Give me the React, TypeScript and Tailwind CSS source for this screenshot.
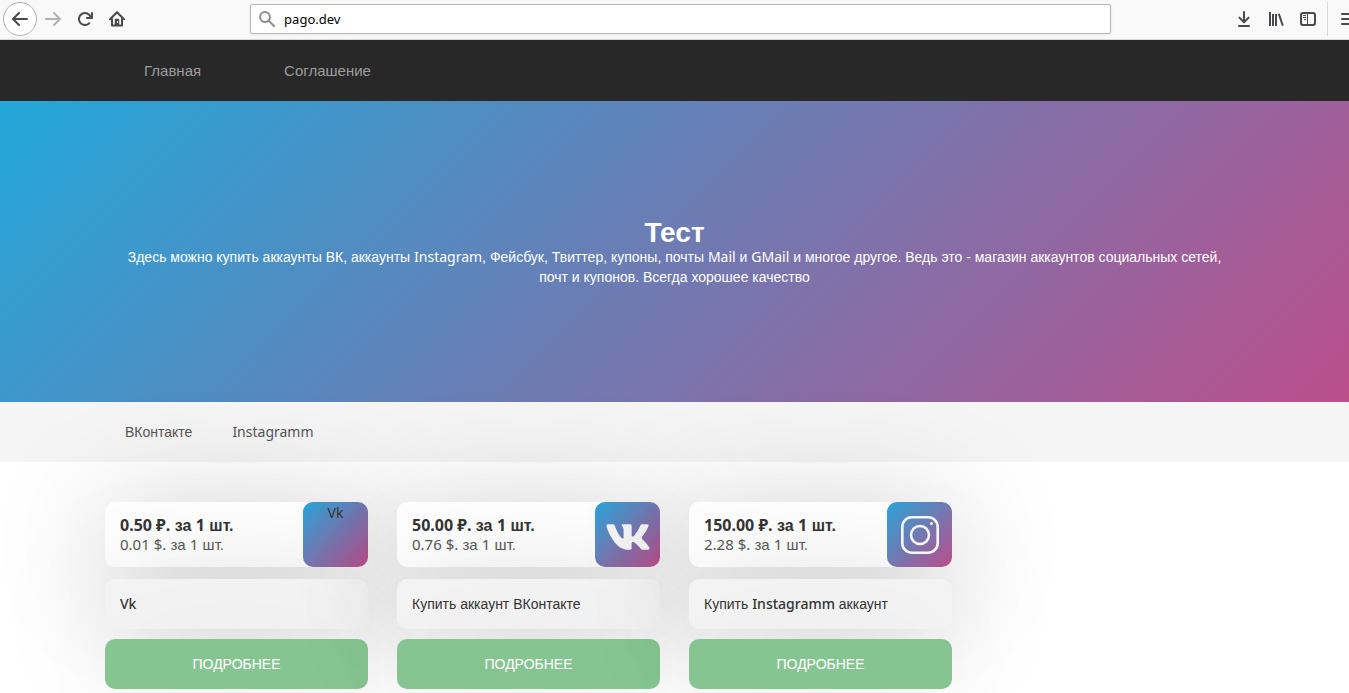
import React from "react";
import { FaVk } from "react-icons/fa";

const latin = "font-['Noto_Sans',sans-serif]";

function Latin({ children }: { children: React.ReactNode }) {
  return <span className={latin}>{children}</span>;
}

function Glyph({ children }: { children: React.ReactNode }) {
  return (
    <svg viewBox="0 0 16 16" className="size-4" fill="currentColor" aria-hidden="true">
      {children}
    </svg>
  );
}

function ToolButton({ label, className = "", children }: { label: string; className?: string; children: React.ReactNode }) {
  return (
    <button
      type="button"
      aria-label={label}
      className={`flex h-8 w-8 shrink-0 items-center justify-center text-[#4a4a4c] ${className}`}
    >
      {children}
    </button>
  );
}

const arrow =
  "M15 7H3.414l4.293-4.293a1 1 0 0 0-1.414-1.414l-6 6a1 1 0 0 0 0 1.414l6 6a1 1 0 0 0 1.414-1.414L3.414 9H15a1 1 0 0 0 0-2z";

function BrowserBar() {
  return (
    <div className="flex h-10 items-center overflow-hidden border-b border-[#d7d7d8] bg-[#f9f9fa] pb-px pl-[3px]">
      <button
        type="button"
        aria-label="Back"
        className="flex size-[34px] shrink-0 items-center justify-center rounded-full border border-[#b1b1b3] bg-white text-[#4a4a4c]"
      >
        <Glyph>
          <path d={arrow} />
        </Glyph>
      </button>
      <ToolButton label="Forward" className="opacity-40">
        <Glyph>
          <path d={arrow} transform="matrix(-1 0 0 1 16 0)" />
        </Glyph>
      </ToolButton>
      <ToolButton label="Reload">
        <Glyph>
          <path d="M15 1a1 1 0 0 0-1 1v2.418A6.995 6.995 0 1 0 8 15a6.954 6.954 0 0 0 4.95-2.05 1 1 0 0 0-1.414-1.414A5.019 5.019 0 1 1 12.549 6H10a1 1 0 0 0 0 2h5a1 1 0 0 0 1-1V2a1 1 0 0 0-1-1z" />
        </Glyph>
      </ToolButton>
      <ToolButton label="Home">
        <Glyph>
          <path
            d="M1 8.2 8 1.300l7 6.900M3 8v6.500h10V8"
            fill="none"
            stroke="currentColor"
            strokeWidth="2"
            strokeLinecap="round"
            strokeLinejoin="round"
          />
          <path d="M5.800 15V9c0-.8.500-1.300 1.200-1.300h2c.7 0 1.200.5 1.200 1.300v6z" />
          <path d="M8 10h1v2H8z" fill="#f9f9fa" />
        </Glyph>
      </ToolButton>
      <div className="flex-[117]" />
      <label className="flex h-[30px] flex-[850] items-center gap-[9px] rounded-xs border border-[#b9b9bb] bg-white pl-2 shadow-[0_1px_3px_rgba(0,0,0,0.08)]">
        <svg viewBox="0 0 16 16" className="size-4 shrink-0" fill="none" stroke="#8c8c8e" strokeWidth="2" aria-hidden="true">
          <circle cx="6" cy="6" r="4.900" />
          <path d="M9.600 9.600 15 15" strokeLinecap="round" />
        </svg>
        <input
          aria-label="Address"
          defaultValue="pago.dev"
          className="min-w-0 flex-1 bg-transparent pt-0.5 font-['Noto_Sans',sans-serif] text-[13px] text-black outline-none"
        />
      </label>
      <div className="flex-[117]" />
      <ToolButton label="Downloads">
        <Glyph>
          <path
            d="M8 1v9.500M3.400 6.600 8 11.200l4.600-4.600M3 15h10"
            fill="none"
            stroke="currentColor"
            strokeWidth="2"
            strokeLinecap="round"
            strokeLinejoin="round"
          />
        </Glyph>
      </ToolButton>
      <ToolButton label="Library">
        <Glyph>
          <path d="M2 1v14M5 3v12M8 3v12M10.800 2.800 14.800 14.700" fill="none" stroke="currentColor" strokeWidth="2" />
        </Glyph>
      </ToolButton>
      <ToolButton label="Sidebars">
        <Glyph>
          <rect x="1" y="2" width="14" height="12" rx="2" fill="none" stroke="currentColor" strokeWidth="2" />
          <path d="M7 2h1v12H7zM3 4h3v1H3zM3 6h3v1H3zM4 8h2v1H4z" />
        </Glyph>
      </ToolButton>
      <div className="ml-[3px] h-[34px] w-px shrink-0 bg-[#d7d7d8]" />
      <div className="w-[21px] shrink-0 overflow-hidden pl-[13px]">
        <button type="button" aria-label="Menu" className="block w-4 text-[#4a4a4c]">
          <Glyph>
            <path d="M1 3h14M1 8h14M1 13h14" stroke="currentColor" strokeWidth="2" strokeLinecap="round" />
          </Glyph>
        </button>
      </div>
    </div>
  );
}

function InstagramMark() {
  return (
    <svg viewBox="0 0 38 38" className="size-[38px]" fill="none" stroke="#f7f7f7" strokeWidth="2.600" aria-hidden="true">
      <rect x="1.300" y="1.300" width="35.400" height="35.400" rx="9.500" />
      <circle cx="19" cy="19" r="9" />
      <circle cx="30.500" cy="7.600" r="1.500" fill="#f7f7f7" stroke="none" />
    </svg>
  );
}

type Product = { rub: string; usd: string; title: React.ReactNode; mark: React.ReactNode };

const products: Product[] = [
  {
    rub: "0.50 ₽",
    usd: "0.01 $",
    title: <Latin>Vk</Latin>,
    mark: <span className={`self-start text-sm leading-[22px] text-[#333] ${latin}`}>Vk</span>,
  },
  {
    rub: "50.00 ₽",
    usd: "0.76 $",
    title: "Купить аккаунт ВКонтакте",
    mark: <FaVk className="mt-1 size-[46px] text-[#f3f3f3]" aria-hidden="true" />,
  },
  {
    rub: "150.00 ₽",
    usd: "2.28 $",
    title: (
      <>
        Купить <Latin>Instagramm</Latin> аккаунт
      </>
    ),
    mark: <InstagramMark />,
  },
];

function Card({ product }: { product: Product }) {
  return (
    <article>
      <div className="flex h-[65px] justify-between rounded-[10px] bg-white shadow-[0_10px_120px_rgba(0,0,0,0.22)]">
        <div className="pt-3.5 pl-[15px] text-[#333]">
          <p className="text-base leading-[18px] font-bold">
            <Latin>{product.rub}.</Latin> за <Latin>1</Latin> шт.
          </p>
          <p className="text-[15px] leading-[18px] text-[#555]">
            <Latin>{product.usd}.</Latin> за <Latin>1</Latin> шт.
          </p>
        </div>
        <div className="flex size-[65px] items-center justify-center rounded-[10px] bg-[linear-gradient(135deg,#27a5d8,#bd4c8a)]">
          {product.mark}
        </div>
      </div>
      <h2 className="mt-3 flex h-[50px] items-center rounded-[10px] bg-[#f4f4f4] pl-[15px] text-sm font-medium text-[#333] shadow-[0_10px_120px_rgba(0,0,0,0.18)]">
        <span>{product.title}</span>
      </h2>
      <button
        type="button"
        className="mt-2.5 block h-[50px] w-full rounded-[10px] bg-[#86c591] text-sm text-white shadow-[0_0_120px_rgba(0,0,0,0.06)]"
      >
        ПОДРОБНЕЕ
      </button>
    </article>
  );
}

export default function App() {
  return (
    <div className="min-h-screen overflow-x-hidden bg-white font-['Liberation_Sans',Arial,sans-serif]">
      <BrowserBar />
      <nav className="bg-[#282828]">
        <div className="mx-auto flex h-[61px] max-w-[1169px] items-center gap-[83px] px-[54px] pt-0.5 text-[15px] text-[#9d9d9d]">
          <a href="#main">Главная</a>
          <a href="#terms">Соглашение</a>
        </div>
      </nav>
      <header className="flex h-[301px] flex-col items-center justify-center bg-[linear-gradient(135deg,#22a7d9,#bb4f8c)] px-24 pt-0.5 text-center text-white">
        <h1 className="text-[28px] leading-7 font-bold">Тест</h1>
        <p className="max-w-[1125px] text-sm leading-5">
          Здесь можно купить аккаунты ВК, аккаунты <Latin>Instagram</Latin>, Фейсбук, Твиттер, купоны, почты{" "}
          <Latin>Mail</Latin> и <Latin>GMail</Latin> и многое другое. Ведь это - магазин аккаунтов социальных сетей,{" "}
          <span>почт и купонов. Всегда хорошее качество</span>
        </p>
      </header>
      <div className="bg-[#f5f5f5]">
        <div className="mx-auto flex h-[60px] max-w-[1169px] items-center gap-10 px-[35px] text-sm text-[#555]">
          <a href="#vk">ВКонтакте</a>
          <a href="#instagram">
            <Latin>Instagramm</Latin>
          </a>
        </div>
      </div>
      <main className="mx-auto grid max-w-[1169px] grid-cols-4 gap-[29px] px-[15px] pt-10">
        {products.map((product) => (
          <Card key={product.rub} product={product} />
        ))}
      </main>
    </div>
  );
}
